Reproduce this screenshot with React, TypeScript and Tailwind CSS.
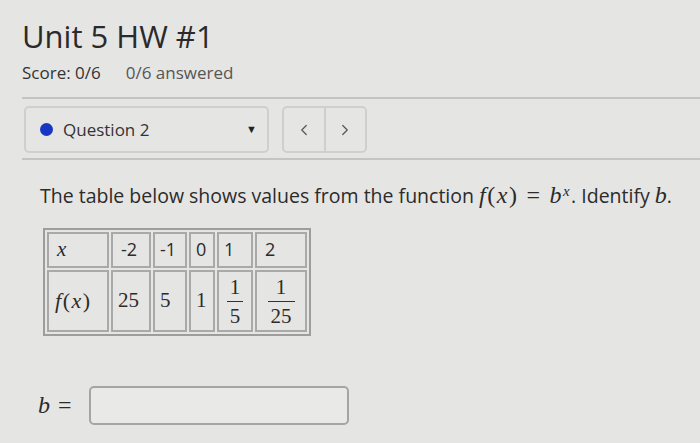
import React from 'react'
import { ChevronLeft, ChevronRight } from 'lucide-react'

const math = { fontFamily: '"Liberation Serif", "DejaVu Serif", serif' }

function Frac({ num, den }: { num: string; den: string }) {
  return (
    <span className="inline-flex flex-col items-center leading-none text-[21px]" style={math}>
      <span className="pb-[3px]">{num}</span>
      <span className="border-t-[1.5px] border-[#333] pt-[4px] px-[3px]">{den}</span>
    </span>
  )
}

export default function App() {
  const cell = 'border-2 border-[#a9a9a9] px-[5px] align-middle'
  return (
    <div
      className="w-[700px] h-[443px] overflow-hidden bg-[#e5e5e4] text-[#2b2b2b]"
      style={{ fontFamily: '"Open Sans", "Noto Sans", sans-serif' }}
    >
      <div className="pl-[22px] pt-[16px]">
        <h1 className="text-[31px] leading-[40px] text-[#2a2a2a]">Unit 5 HW #1</h1>
        <div className="flex gap-[25px] text-[17px] mt-[5px] leading-[24px]">
          <span className="text-[#333]">Score: 0/6</span>
          <span className="text-[#555]">0/6 answered</span>
        </div>
        <div className="mt-[12px] border-t-2 border-[#c4c4c4]" />
        <div className="flex gap-[13px] pt-[7px] pl-[2px]">
          <div className="w-[245px] h-[47px] border-2 border-[#cfcfcf] rounded-[5px] flex items-center px-[14px]">
            <span className="w-[13px] h-[13px] rounded-full bg-[#1836c4]" />
            <span className="ml-[10px] text-[17px] text-[#333]">Question 2</span>
            <span className="ml-auto mr-[-4px] text-[11px] text-[#222]">▼</span>
          </div>
          <div className="w-[85px] h-[47px] border-2 border-[#cfcfcf] rounded-[5px] flex">
            <div className="flex-1 flex items-center justify-center border-r-2 border-[#cfcfcf] text-[#555]">
              <ChevronLeft size={18} strokeWidth={1.6} />
            </div>
            <div className="flex-1 flex items-center justify-center text-[#555]">
              <ChevronRight size={18} strokeWidth={1.6} />
            </div>
          </div>
        </div>
        <div className="mt-[5px] border-t-2 border-[#c4c4c4]" />
      </div>

      <div className="pl-[40px] pt-[20px]">
        <p className="text-[19.5px] text-[#2b2b2b] leading-[30px] whitespace-nowrap">
          The table below shows values from the function{' '}
          <span className="text-[24px] tracking-[1.5px]" style={math}>
            <i>f</i>(<i>x</i>)<span className="mx-[8px]">=</span><i>b</i>
            <sup className="text-[15px]"><i>x</i></sup>
          </span>
          . Identify <i className="text-[24px]" style={math}>b</i>.
        </p>

        <table className="mt-[17px] ml-[3px] border-separate border-spacing-[2px] border-2 border-[#9d9d9d] text-[18px]">
          <tbody>
            <tr className="h-[34px]">
              <td className={`${cell} w-[62px] pl-[8px]`}>
                <i style={math} className="text-[21px]">x</i>
              </td>
              <td className={`${cell} w-[40px] pl-[8px]`}>-2</td>
              <td className={`${cell} w-[34px]`}>-1</td>
              <td className={`${cell} w-[26px]`}>0</td>
              <td className={`${cell} w-[36px]`}>1</td>
              <td className={`${cell} w-[52px] pl-[8px]`}>2</td>
            </tr>
            <tr className="h-[62px]">
              <td className={`${cell} pl-[6px] text-[22px] tracking-[1.5px]`} style={math}>
                <i>f</i>(<i>x</i>)
              </td>
              <td className={`${cell} text-[21px]`} style={math}>25</td>
              <td className={`${cell} text-[21px]`} style={math}>5</td>
              <td className={`${cell} text-[21px]`} style={math}>1</td>
              <td className={`${cell} text-center`}><Frac num="1" den="5" /></td>
              <td className={`${cell} text-center`}><Frac num="1" den="25" /></td>
            </tr>
          </tbody>
        </table>

        <div className="flex items-center mt-[50px] ml-[-2px]">
          <span className="text-[24px] w-[51px]" style={math}>
            <i>b</i><span className="ml-[8px]">=</span>
          </span>
          <div className="w-[260px] h-[39px] border-2 border-[#a5a5a5] rounded-[5px] bg-[#e9e9e8]" />
        </div>
      </div>
    </div>
  )
}
